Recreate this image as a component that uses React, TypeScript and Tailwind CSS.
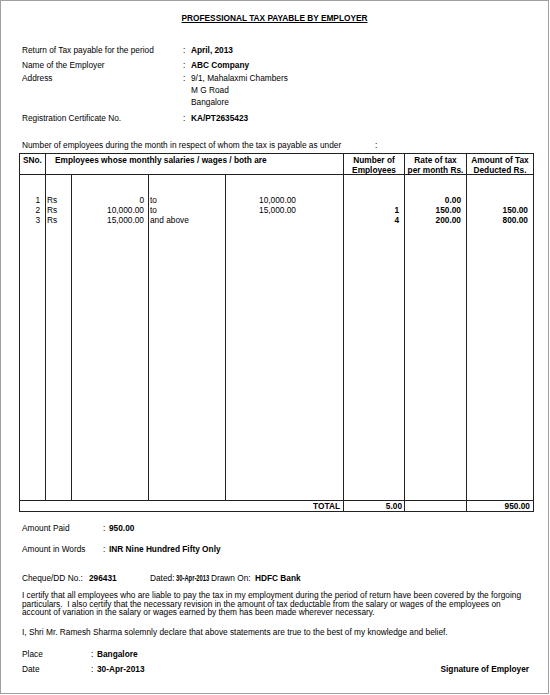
import React from "react";

const rows = [
  { sno: "1", from: "0", op: "to", to: "10,000.00", count: "", rate: "0.00", amount: "" },
  { sno: "2", from: "10,000.00", op: "to", to: "15,000.00", count: "1", rate: "150.00", amount: "150.00" },
  { sno: "3", from: "15,000.00", op: "and above", to: "", count: "4", rate: "200.00", amount: "800.00" },
];

const InfoRow = ({ label, value, className = "" }: { label: string; value: React.ReactNode; className?: string }) => (
  <div className={`flex h-[10px] ${className}`}>
    <span className="w-[161px] shrink-0">{label}</span>
    <span className="w-[8px] shrink-0">:</span>
    <span>{value}</span>
  </div>
);

const BodyCol = ({ width, className = "", items }: { width: string; className?: string; items: string[] }) => (
  <div className={`${width} shrink-0 border-r border-[#222] pt-[20px] ${className}`}>
    {items.map((t, i) => (
      <div key={i} className="h-[10px] whitespace-nowrap">
        {t}
      </div>
    ))}
  </div>
);

export default function App() {
  return (
    <div className="w-[550px] h-[695px] bg-white">
      <div className="w-[549px] h-[694px] border border-[#a0a0a0] font-['Liberation_Sans',Arial,sans-serif] text-[8.3px] leading-[10px] text-black">
        <div className="pt-[12px] text-center font-bold">
          <span className="underline underline-offset-[1px]">PROFESSIONAL TAX PAYABLE BY EMPLOYER</span>
        </div>

        {/* header info */}
        <div className="mt-[22px] pl-[21px] flex flex-col">
          <InfoRow label="Return of Tax payable for the period" value={<b>April, 2013</b>} />
          <InfoRow label="Name of the Employer" value={<b>ABC Company</b>} className="mt-[5px]" />
          <InfoRow label="Address" value="9/1, Mahalaxmi Chambers" className="mt-[3px]" />
          <InfoRow label="" value="M G Road" className="mt-[2px] [&>span:nth-child(2)]:invisible" />
          <InfoRow label="" value="Bangalore" className="mt-[2px] [&>span:nth-child(2)]:invisible" />
          <InfoRow label="Registration Certificate No." value={<b>KA/PT2635423</b>} className="mt-[6px]" />
        </div>

        <div className="mt-[17px] pl-[21px] flex h-[10px]">
          <span className="w-[353px] shrink-0">
            Number of employees during the month in respect of whom the tax is payable as under
          </span>
          <span>:</span>
        </div>

        {/* table */}
        <div className="mt-[3px] ml-[18px] w-[515px] border border-[#222]">
          <div className="flex h-[21px] border-b border-[#222] font-bold">
            <div className="w-[26px] shrink-0 border-r border-[#222] pl-[3px] pt-[1px]">SNo.</div>
            <div className="w-[298px] shrink-0 border-r border-[#222] pl-[9px] pt-[1px]">
              Employees whose monthly salaries / wages / both are
            </div>
            <div className="w-[61px] shrink-0 border-r border-[#222] pt-[1px] text-center">
              Number of
              <br />
              Employees
            </div>
            <div className="w-[62px] shrink-0 border-r border-[#222] pt-[1px] text-center">
              Rate of tax
              <br />
              per month Rs.
            </div>
            <div className="flex-1 pt-[1px] text-center">
              Amount of Tax
              <br />
              Deducted Rs.
            </div>
          </div>

          <div className="flex h-[325px]">
            <BodyCol width="w-[26px]" className="text-right pr-[5px]" items={rows.map((r) => r.sno)} />
            <BodyCol width="w-[26px]" className="pl-[1px]" items={rows.map(() => "Rs")} />
            <BodyCol width="w-[77px]" className="text-right pr-[4px]" items={rows.map((r) => r.from)} />
            <BodyCol width="w-[77px]" className="pl-[1px]" items={rows.map((r) => r.op)} />
            <BodyCol width="w-[118px]" className="text-right pr-[47px]" items={rows.map((r) => r.to)} />
            <BodyCol width="w-[61px]" className="text-right pr-[5px] font-bold" items={rows.map((r) => r.count)} />
            <BodyCol width="w-[62px]" className="text-right pr-[5px] font-bold" items={rows.map((r) => r.rate)} />
            <div className="flex-1 pt-[20px] text-right pr-[5px] font-bold">
              {rows.map((r, i) => (
                <div key={i} className="h-[10px]">
                  {r.amount}
                </div>
              ))}
            </div>
          </div>

          <div className="flex h-[11px] border-t border-[#222] font-bold">
            <div className="w-[324px] shrink-0 border-r border-[#222] pr-[3px] text-right">TOTAL</div>
            <div className="w-[61px] shrink-0 border-r border-[#222] pr-[2px] text-right">5.00</div>
            <div className="w-[62px] shrink-0 border-r border-[#222]"></div>
            <div className="flex-1 pr-[3px] text-right">950.00</div>
          </div>
        </div>

        {/* payment */}
        <div className="mt-[11px] pl-[21px] flex h-[10px]">
          <span className="w-[81px] shrink-0">Amount Paid</span>
          <span className="w-[6px] shrink-0">:</span>
          <b>950.00</b>
        </div>
        <div className="mt-[11px] pl-[21px] flex h-[10px]">
          <span className="w-[81px] shrink-0">Amount in Words</span>
          <span className="w-[6px] shrink-0">:</span>
          <b>INR Nine Hundred Fifty Only</b>
        </div>

        <div className="mt-[19px] pl-[21px] flex h-[10px] whitespace-nowrap">
          <span className="w-[67px] shrink-0">Cheque/DD No.:</span>
          <b className="w-[61px] shrink-0">296431</b>
          <span className="w-[26px] shrink-0">Dated:</span>
          <span className="w-[35px] shrink-0">
            <b className="inline-block origin-left scale-x-[0.7]">30-Apr-2013</b>
          </span>
          <span className="w-[44px] shrink-0">Drawn On:</span>
          <b>HDFC Bank</b>
        </div>

        <p className="mt-[8px] pl-[21px] pr-[16px] leading-[8.5px]">
          I certify that all employees who are liable to pay the tax in my employment during the period of return have
          been covered by the forgoing particulars. &nbsp;I also certify that the necessary revision in the amount of tax
          deductable from the salary or wages of the employees on account of variation in the salary or wages earned by
          them has been made wherever necessary.
        </p>

        <p className="mt-[10px] pl-[21px]">
          I, Shri Mr. Ramesh Sharma solemnly declare that above statements are true to the best of my knowledge and
          belief.
        </p>

        <div className="mt-[12px] pl-[21px] flex h-[10px]">
          <span className="w-[69px] shrink-0">Place</span>
          <span className="w-[6px] shrink-0">:</span>
          <b>Bangalore</b>
        </div>
        <div className="mt-[5px] pl-[21px] pr-[19px] flex h-[10px]">
          <span className="w-[69px] shrink-0">Date</span>
          <span className="w-[6px] shrink-0">:</span>
          <b>30-Apr-2013</b>
          <b className="ml-auto">Signature of Employer</b>
        </div>
      </div>
    </div>
  );
}
